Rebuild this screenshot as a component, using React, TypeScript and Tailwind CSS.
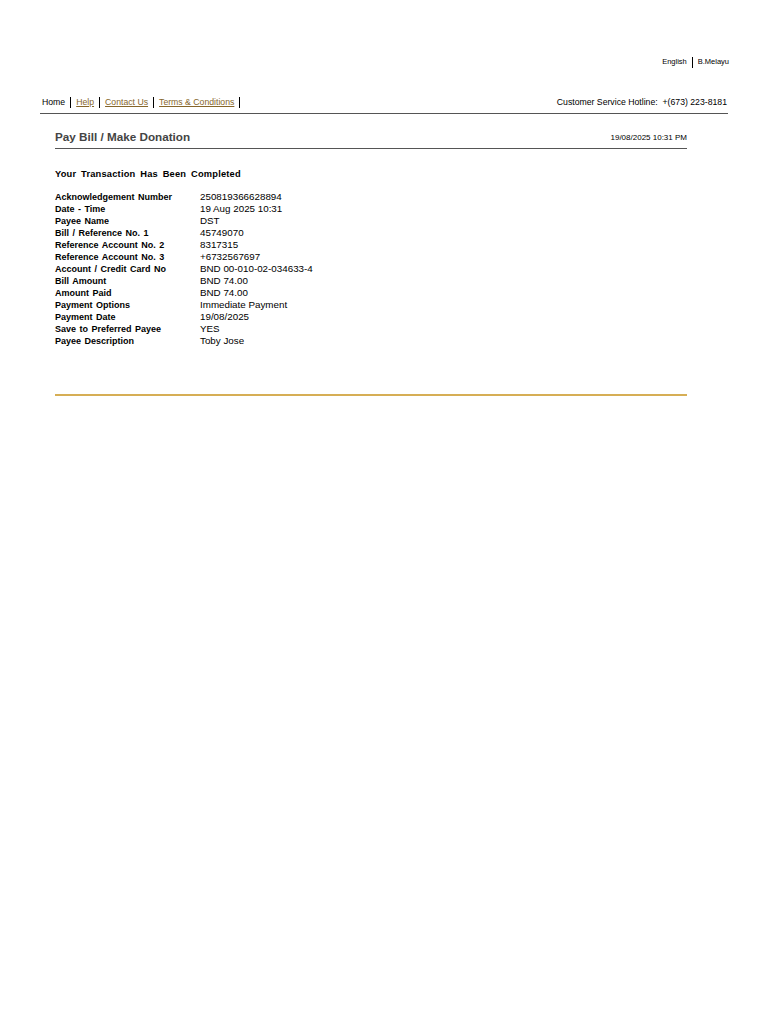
const rows: [string, string][] = [
  ["Acknowledgement Number", "250819366628894"],
  ["Date - Time", "19 Aug 2025 10:31"],
  ["Payee Name", "DST"],
  ["Bill / Reference No. 1", "45749070"],
  ["Reference Account No. 2", "8317315"],
  ["Reference Account No. 3", "+6732567697"],
  ["Account / Credit Card No", "BND 00-010-02-034633-4"],
  ["Bill Amount", "BND 74.00"],
  ["Amount Paid", "BND 74.00"],
  ["Payment Options", "Immediate Payment"],
  ["Payment Date", "19/08/2025"],
  ["Save to Preferred Payee", "YES"],
  ["Payee Description", "Toby Jose"],
];

const Sep = () => <span className="mx-[5px] inline-block h-[11px] w-px bg-black align-middle" />;

export default function App() {
  return (
    <div className="min-h-[1024px] bg-white font-['Liberation_Sans',Arial,sans-serif] text-black">
      <div className="flex h-[69px] items-end justify-end pb-[1px] pr-[39px] text-[7.5px] leading-[12px]">
        <span>English</span>
        <Sep />
        <span>B.Melayu</span>
      </div>

      <div className="mx-[40px] mt-[27px] flex h-[18px] items-center justify-between border-b border-[#555] pb-[4px] pl-[2px] pr-[1px] text-[8.7px] leading-[13px]">
        <div className="flex items-center">
          <span>Home</span>
          <Sep />
          <a className="text-[#86662a] underline">Help</a>
          <Sep />
          <a className="text-[#86662a] underline">Contact Us</a>
          <Sep />
          <a className="text-[#86662a] underline">Terms &amp; Conditions</a>
          <Sep />
        </div>
        <span>Customer Service Hotline:&nbsp; +(673) 223-8181</span>
      </div>

      <div className="mx-[55px] mr-[81px]">
        <div className="mt-[13px] flex h-[22px] items-end justify-between border-b border-[#555] pb-[2px] leading-[18px]">
          <span className="text-[11.7px] font-bold text-[#444]">Pay Bill / Make Donation</span>
          <span className="pb-[1px] text-[8px] leading-[14px]">19/08/2025 10:31 PM</span>
        </div>

        <div className="mt-[18px] text-[9.3px] font-bold leading-[14px] tracking-[0.2px] [word-spacing:2px]">
          Your Transaction Has Been Completed
        </div>

        <div className="mt-[10px] flex flex-col leading-[12px]">
          {rows.map(([label, value]) => (
            <div key={label} className="flex h-[12px]">
              <span className="w-[145px] text-[9px] font-bold [word-spacing:1px]">{label}</span>
              <span className="text-[9.8px]">{value}</span>
            </div>
          ))}
        </div>

        <div className="mt-[47px] h-[1.5px] bg-[#d6ae55]" />
      </div>
    </div>
  );
}
